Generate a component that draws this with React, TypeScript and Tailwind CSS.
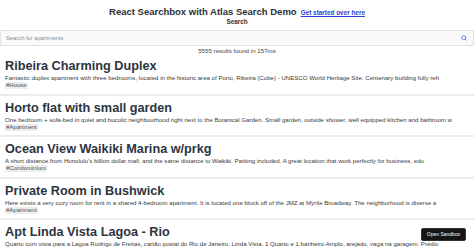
import { Search } from "lucide-react";

interface Listing {
  name: string;
  summary: string;
  type: string;
}

const listings: Listing[] = [
  {
    name: "Ribeira Charming Duplex",
    summary:
      "Fantastic duplex apartment with three bedrooms, located in the historic area of Porto, Ribeira (Cube) - UNESCO World Heritage Site. Centenary building fully reh",
    type: "House",
  },
  {
    name: "Horto flat with small garden",
    summary:
      "One bedroom + sofa-bed in quiet and bucolic neighbourhood right next to the Botanical Garden. Small garden, outside shower, well equipped kitchen and bathroom w",
    type: "Apartment",
  },
  {
    name: "Ocean View Waikiki Marina w/prkg",
    summary:
      "A short distance from Honolulu's billion dollar mall, and the same distance to Waikiki. Parking included. A great location that work perfectly for business, edu",
    type: "Condominium",
  },
  {
    name: "Private Room in Bushwick",
    summary:
      "Here exists a very cozy room for rent in a shared 4-bedroom apartment. It is located one block off of the JMZ at Myrtle Broadway. The neighborhood is diverse a",
    type: "Apartment",
  },
  {
    name: "Apt Linda Vista Lagoa - Rio",
    summary:
      "Quarto com vista para a Lagoa Rodrigo de Freitas, cartão postal do Rio de Janeiro. Linda Vista. 1 Quarto e 1 banheiro Amplo, arejado, vaga na garagem. Prédio",
    type: "Apartment",
  },
];

function ResultItem({ item }: { item: Listing }) {
  return (
    <div className="border-b-2 border-[#ececec] px-[5px] pt-[5px] pb-[4px]">
      <h2 className="text-[12.7px] font-bold leading-[15px] text-[#2d3440]">{item.name}</h2>
      <p className="overflow-hidden whitespace-nowrap text-[6.1px] leading-[7.5px] text-[#3a3a3a]">
        {item.summary}
      </p>
      <div className="flex h-[8px] items-center">
        <span className="rounded-[1px] bg-[#ededed] px-[1px] text-[6px] leading-[7px] text-[#555]">
          #{item.type}
        </span>
      </div>
    </div>
  );
}

export default function App() {
  return (
    <div
      className="relative h-[248px] w-[474px] overflow-hidden bg-white"
      style={{ fontFamily: '"Liberation Sans", Arial, sans-serif' }}
    >
      <header className="flex flex-col items-center pt-[6px]">
        <div className="flex items-baseline gap-[4px] leading-[12px]">
          <h1 className="text-[9.5px] font-bold text-[#2b2f38]">React Searchbox with Atlas Search Demo</h1>
          <a href="#" className="text-[6.4px] font-bold text-[#2a3fd6] underline">
            Get started over here
          </a>
        </div>
        <div className="text-[6.3px] font-bold leading-[6px] text-[#2b2f38]">Search</div>
      </header>

      <div className="mt-[5px] flex h-[16px] items-center justify-between border border-[#e3e3e3] bg-[#fafafa] pl-[5px] pr-[6px]">
        <span className="text-[5.8px] text-[#8a8a8a]">Search for apartments</span>
        <Search className="h-[6px] w-[6px] text-[#3d6fd2]" strokeWidth={3} />
      </div>

      <div className="mt-[1px] text-center text-[6.2px] leading-[7px] text-[#444]">
        5555 results found in 157ms
      </div>

      <div className="flex flex-col">
        {listings.map((item) => (
          <ResultItem key={item.name} item={item} />
        ))}
      </div>

      <button className="absolute right-[8px] bottom-[7px] h-[13px] w-[45px] rounded-[2px] border border-[#333] bg-[#151515] text-[5px] text-white">
        Open Sandbox
      </button>
    </div>
  );
}
